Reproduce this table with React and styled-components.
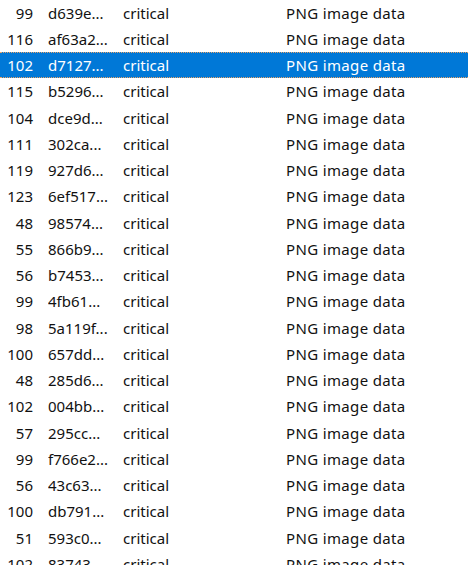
import React from "react";
import styled, { createGlobalStyle } from "styled-components";

const Global = createGlobalStyle`
  html, body { margin: 0; padding: 0; background: #ffffff; overflow: hidden; }
  body { font-family: "Noto Sans", "Open Sans", "DejaVu Sans", sans-serif; }
`;

const List = styled.div`
  display: flex;
  flex-direction: column;
  margin-top: -0.5px;
  width: 468px;
`;

const Row = styled.div`
  display: grid;
  grid-template-columns: 33px 15px 75px 163px 1fr;
  align-items: center;
  height: 26.25px;
  box-sizing: border-box;
  font-size: 15px;
  color: ${(p) => (p.$selected ? "#ffffff" : "#111111")};
  background: ${(p) => (p.$selected ? "#0078d7" : "transparent")};
  border-top: 1px dotted ${(p) => (p.$selected ? "#e8a46a" : "transparent")};
  border-bottom: 1px dotted ${(p) => (p.$selected ? "#e8a46a" : "transparent")};
  white-space: nowrap;
`;

const Num = styled.span`
  text-align: right;
`;

const Cell = styled.span`
  grid-column: ${(p) => p.$col};
  overflow: hidden;
  letter-spacing: ${(p) => p.$spacing || "0"};
`;

const rows = [
  ["99", "d639e..."],
  ["116", "af63a2..."],
  ["102", "d7127..."],
  ["115", "b5296..."],
  ["104", "dce9d..."],
  ["111", "302ca..."],
  ["119", "927d6..."],
  ["123", "6ef517..."],
  ["48", "98574..."],
  ["55", "866b9..."],
  ["56", "b7453..."],
  ["99", "4fb61..."],
  ["98", "5a119f..."],
  ["100", "657dd..."],
  ["48", "285d6..."],
  ["102", "004bb..."],
  ["57", "295cc..."],
  ["99", "f766e2..."],
  ["56", "43c63..."],
  ["100", "db791..."],
  ["51", "593c0..."],
  ["102", "83743..."],
];

export default function App() {
  return (
    <>
      <Global />
      <List>
        {rows.map(([n, h], i) => (
          <Row key={i} $selected={i === 2}>
            <Num>{n}</Num>
            <Cell $col={3}>{h}</Cell>
            <Cell $col={4}>critical</Cell>
            <Cell $col={5} $spacing="0.35px">PNG image data</Cell>
          </Row>
        ))}
      </List>
    </>
  );
}
